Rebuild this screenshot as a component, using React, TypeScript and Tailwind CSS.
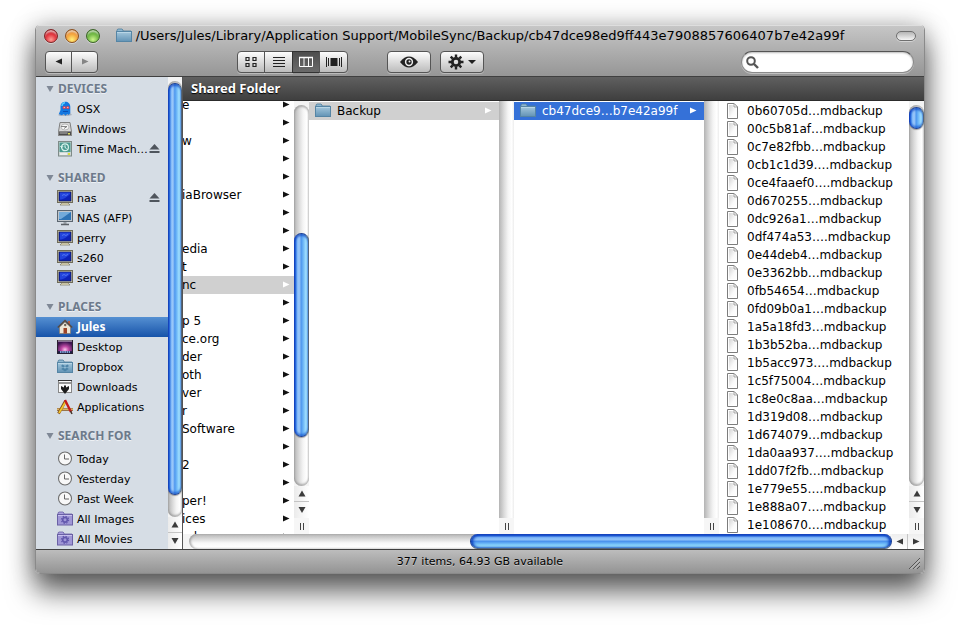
import type { ReactNode } from "react";

interface SidebarItem {
    label: string;
    icon: ReactNode;
    ejectable?: boolean;
    active?: boolean;
}

interface SidebarSection {
    title: string;
    items: SidebarItem[];
    spaced?: boolean;
}

function FolderIcon() {
    return (
        <svg width="16" height="16" viewBox="0 0 16 16" className="shrink-0" aria-hidden="true">
            <defs>
                <linearGradient id="folder" x1="0" y1="0" x2="0" y2="1">
                    <stop offset="0" stopColor="#a5c8dd" />
                    <stop offset="1" stopColor="#6293b5" />
                </linearGradient>
            </defs>
            <path d="M1 4V1.800L2 1h4l1 1v1h8v1z" fill="#8fb7d0" stroke="#4f7d9c" strokeWidth=".8" />
            <rect x=".5" y="3.500" width="15" height="10" fill="url(#folder)" stroke="#5585a5" />
            <path d="M1 4.500h14" stroke="#b9d6e6" />
        </svg>
    );
}

function DocIcon() {
    return (
        <svg width="14" height="18" viewBox="0 0 14 18" className="shrink-0" aria-hidden="true">
            <defs>
                <linearGradient id="sheet" x1="0" y1="0" x2="1" y2="1">
                    <stop offset="0" stopColor="#d4d4d4" />
                    <stop offset=".6" stopColor="#fafafa" />
                    <stop offset="1" stopColor="#fff" />
                </linearGradient>
            </defs>
            <path d="M1.500 1.500h6.500l3.500 3.500v11.500h-10z" fill="#fff" stroke="#7c7c7c" />
            <path d="M3 3h4.500v3h3v9H3z" fill="url(#sheet)" />
            <path d="M8 1.500V5h3.500z" fill="#fff" stroke="#8e8e8e" strokeWidth=".8" />
        </svg>
    );
}

function GhostIcon() {
    return (
        <svg width="16" height="16" viewBox="0 0 16 16" aria-hidden="true">
            <path d="M1 14l3-2.500h9l2 2.500-4 1H3z" fill="#8b95a3" opacity=".6" />
            <path d="M3.500 9V5.500C3.500 2.500 5.500.7 8.300.7s5 2 5 5V12l-1.500 2-1.600-1-1.700 1.700L6.800 13l-2 1.300-3-1.300z" fill="#1478e0" />
            <path d="M5 5c0-2 1.300-3.200 3-3.200" stroke="#59d0ff" strokeWidth="1.500" fill="none" />
            <circle cx="7.200" cy="6.500" r="1.600" fill="#e8404a" />
            <circle cx="10.800" cy="6.500" r="1.600" fill="#e8404a" />
            <path d="M6.800 6.500h.8M10.400 6.500h.8" stroke="#fff" />
            <path d="M6 10.500h5" stroke="#0a4fb4" />
        </svg>
    );
}

function DriveIcon() {
    return (
        <svg width="16" height="16" viewBox="0 0 16 16" aria-hidden="true">
            <path d="M3 1.500h10l1.500 9h-13z" fill="#d9d9d9" stroke="#808080" />
            <ellipse cx="8" cy="6" rx="4" ry="3" fill="#f7f7f7" stroke="#aaa" strokeWidth=".8" />
            <path d="M4 5.500h6l-3 2" stroke="#777" fill="none" strokeWidth=".9" />
            <rect x="1.500" y="10.500" width="13" height="4" fill="#4c4c4c" stroke="#888" />
            <path d="M2.500 12h8" stroke="#b5b5b5" />
            <rect x="11" y="12" width="2" height="1.500" fill="#dede5a" />
        </svg>
    );
}

function TimeMachineIcon() {
    return (
        <svg width="16" height="16" viewBox="0 0 16 16" aria-hidden="true">
            <rect x="1.500" y=".5" width="13" height="14.500" fill="#cfd6d4" stroke="#7e8b88" />
            <rect x="2.500" y="1.500" width="11" height="9.500" fill="#4a9a90" />
            <circle cx="8" cy="6.300" r="3.400" fill="none" stroke="#d8f3ec" strokeWidth="1.200" />
            <path d="M8 4.300v2.200l1.500 1M3.500 5l1.200 1.700L6 5.200" stroke="#e9fffa" fill="none" />
            <path d="M3 13h7" stroke="#f4f4f4" strokeWidth="1.500" />
            <rect x="11" y="12" width="2" height="2" fill="#d9dd3c" />
        </svg>
    );
}

function PcIcon() {
    return (
        <svg width="16" height="16" viewBox="0 0 16 16" aria-hidden="true">
            <rect x=".5" y=".5" width="15" height="12" fill="#ddd7b4" stroke="#6f6b58" />
            <rect x="2" y="2" width="12" height="9" fill="#0d22b8" stroke="#111c5a" strokeWidth=".8" />
            <path d="M3 9.500C6 9.500 9 8 13 4V2.500H3z" fill="#2344dc" />
            <path d="M5 5.500l2-1 2 1 2-1.500" stroke="#6689fb" strokeWidth=".7" fill="none" />
            <path d="M5 13h6l2 2H3z" fill="#f0eac8" stroke="#77725e" strokeWidth=".7" />
        </svg>
    );
}

function MacDisplayIcon() {
    return (
        <svg width="16" height="16" viewBox="0 0 16 16" aria-hidden="true">
            <rect x=".5" y=".5" width="15" height="11" fill="#bfc5cb" stroke="#5c6670" />
            <rect x="2" y="2" width="12" height="8" fill="#2d73b5" />
            <path d="M2 2h12L4 9H2z" fill="#72aada" />
            <path d="M6.500 12h3v2h-3z" fill="#9ca3aa" />
            <path d="M4 14.500h8" stroke="#5c6268" strokeWidth="1.500" />
        </svg>
    );
}

function HomeIcon() {
    return (
        <svg width="16" height="16" viewBox="0 0 16 16" aria-hidden="true">
            <path d="M2.500 8v6.500h11V8L8 3z" fill="#ece5d5" stroke="#85796a" strokeWidth=".7" />
            <path d="M11 2h2v4h-2z" fill="#b5573f" />
            <path d="M.8 8.500L8 1.500l7.200 7" stroke="#574a40" strokeWidth="1.500" fill="none" />
            <rect x="6.500" y="9" width="3.500" height="5.500" fill="#9c4326" />
            <circle cx="8.200" cy="6" r="1.200" fill="#6b6257" />
        </svg>
    );
}

function DesktopIcon() {
    return (
        <svg width="16" height="16" viewBox="0 0 16 16" aria-hidden="true">
            <defs>
                <radialGradient id="aurora" cx=".5" cy=".7" r=".6">
                    <stop offset="0" stopColor="#fbc6ea" />
                    <stop offset=".4" stopColor="#c04ba6" />
                    <stop offset="1" stopColor="#3c1450" />
                </radialGradient>
            </defs>
            <rect x=".5" y="1.500" width="15" height="13" fill="url(#aurora)" stroke="#2a2030" />
            <path d="M1 2h14" stroke="#d5cdd8" />
            <path d="M1 13.200h14" stroke="#191d44" strokeWidth="2" />
            <path d="M3 13h10" stroke="#9cc8ff" strokeWidth="1.500" strokeDasharray="1.500 .700" />
        </svg>
    );
}

function DropboxIcon() {
    return (
        <span className="relative block size-4">
            <FolderIcon />
            <svg width="16" height="16" viewBox="0 0 16 16" className="absolute inset-0" aria-hidden="true">
                <path d="M5.500 5.500L8 7l2.500-1.500L12 7 9.800 8.500l2 1.500L8 12.500 4.200 10l2-1.500L4 7z" fill="#4d84a8" />
                <path d="M8 7.300l2 1.200-2 1.300-2-1.300z" fill="#8fb9d2" />
            </svg>
        </span>
    );
}

function DownloadsIcon() {
    return (
        <svg width="16" height="16" viewBox="0 0 16 16" aria-hidden="true">
            <rect x="1.500" y="1.500" width="13" height="12" fill="#fafafa" stroke="#888" />
            <path d="M1 1.500h14M2 4h12" stroke="#333" />
            <path d="M4 7l3 1.500V6.500h2v2L12 7v3l-4 5-4-5z" fill="#1c1c1c" />
        </svg>
    );
}

function ApplicationsIcon() {
    return (
        <svg width="16" height="16" viewBox="0 0 16 16" aria-hidden="true">
            <path d="M0 10.500h16" stroke="#8a5c22" strokeWidth="2.600" />
            <path d="M0 10.300h16" stroke="#dcb466" strokeWidth="1.400" />
            <path d="M1.500 14.500L8.500 2" stroke="#7c4818" strokeWidth="2.800" />
            <path d="M2 14L8.800 2.500" stroke="#f3c62e" strokeWidth="1.800" />
            <path d="M8 1l6 12" stroke="#c51c1c" strokeWidth="2.400" />
            <path d="M13.500 12l1.500 3" stroke="#44362b" strokeWidth="1.500" />
        </svg>
    );
}

function ClockIcon() {
    return (
        <svg width="16" height="16" viewBox="0 0 16 16" aria-hidden="true">
            <circle cx="8" cy="7.500" r="6.500" fill="#f8f8f8" stroke="#6e6e6e" strokeWidth="1.100" />
            <path d="M7.500 3.500V8H12" stroke="#666" fill="none" />
        </svg>
    );
}

function SmartFolderIcon() {
    return (
        <svg width="16" height="16" viewBox="0 0 16 16" aria-hidden="true">
            <path d="M1 4V1.800L2 1h4l1 1v1h8v1z" fill="#aaa0dc" stroke="#6a60a5" strokeWidth=".8" />
            <rect x=".5" y="3.500" width="15" height="10.500" fill="#a097d6" stroke="#6a60a5" />
            <path d="M1 4.500h14" stroke="#c8c0ee" />
            <circle cx="8" cy="8.800" r="2.300" fill="none" stroke="#6257ac" strokeWidth="1.600" />
            <circle cx="8" cy="8.800" r="3.600" fill="none" stroke="#6257ac" strokeWidth="1.200" strokeDasharray="1.400 1.430" />
        </svg>
    );
}

function EjectIcon() {
    return (
        <svg width="12" height="12" viewBox="0 0 12 12" aria-hidden="true">
            <path d="M5.500 1l5 5.500h-10z" fill="#4f555d" />
            <path d="M.5 9h10" stroke="#4f555d" strokeWidth="2" />
        </svg>
    );
}

const sections: SidebarSection[] = [
    {
        title: "DEVICES",
        items: [
            { label: "OSX", icon: <GhostIcon /> },
            { label: "Windows", icon: <DriveIcon /> },
            { label: "Time Mach…", icon: <TimeMachineIcon />, ejectable: true },
        ],
    },
    {
        title: "SHARED",
        items: [
            { label: "nas", icon: <PcIcon />, ejectable: true },
            { label: "NAS (AFP)", icon: <MacDisplayIcon /> },
            { label: "perry", icon: <PcIcon /> },
            { label: "s260", icon: <PcIcon /> },
            { label: "server", icon: <PcIcon /> },
        ],
    },
    {
        title: "PLACES",
        items: [
            { label: "Jules", icon: <HomeIcon />, active: true },
            { label: "Desktop", icon: <DesktopIcon /> },
            { label: "Dropbox", icon: <DropboxIcon /> },
            { label: "Downloads", icon: <DownloadsIcon /> },
            { label: "Applications", icon: <ApplicationsIcon /> },
        ],
    },
    {
        title: "SEARCH FOR",
        spaced: true,
        items: [
            { label: "Today", icon: <ClockIcon /> },
            { label: "Yesterday", icon: <ClockIcon /> },
            { label: "Past Week", icon: <ClockIcon /> },
            { label: "All Images", icon: <SmartFolderIcon /> },
            { label: "All Movies", icon: <SmartFolderIcon /> },
        ],
    },
];

// This column is scrolled sideways, only the tails of the names show
const supportFolders = [
    "e", "", "w", "", "", "iaBrowser", "", "", "edia", "t", "nc", "", "p 5", "ce.org", "der",
    "oth", "ver", "r", "Software", "", "2", "", "per!", "ices", "nd",
];

const backupFiles = [
    "0b60705d…mdbackup", "00c5b81af…mdbackup", "0c7e82fbb…mdbackup", "0cb1c1d39….mdbackup",
    "0ce4faaef0….mdbackup", "0d670255…mdbackup", "0dc926a1…mdbackup", "0df474a53….mdbackup",
    "0e44deb4…mdbackup", "0e3362bb…mdbackup", "0fb54654…mdbackup", "0fd09b0a1…mdbackup",
    "1a5a18fd3…mdbackup", "1b3b52ba…mdbackup", "1b5acc973….mdbackup", "1c5f75004…mdbackup",
    "1c8e0c8aa…mdbackup", "1d319d08…mdbackup", "1d674079…mdbackup", "1da0aa937….mdbackup",
    "1dd07f2fb…mdbackup", "1e779e55….mdbackup", "1e888a07….mdbackup", "1e108670….mdbackup",
];

function Arrow({ dir }: { dir: "up" | "down" | "left" | "right" }) {
    const points = {
        up: "4,0.5 7.5,6.5 0.5,6.5",
        down: "0.5,1 7.5,1 4,7",
        left: "0.5,3.5 7,0.5 7,6.5",
        right: "1,0.5 7.5,3.5 1,6.5",
    }[dir];
    return (
        <svg width="8" height="8" viewBox="0 0 8 8" className="shrink-0" aria-hidden="true">
            <polygon points={points} fill="currentColor" />
        </svg>
    );
}

function Grip() {
    return (
        <div className="flex h-4 shrink-0 items-center justify-center gap-0.5 bg-[#f6f6f6]">
            <span className="h-[7px] w-px bg-[#444]" />
            <span className="h-[7px] w-px bg-[#444]" />
        </div>
    );
}

const trackV = "bg-[linear-gradient(to_right,#b4b4b4,#dcdcdc_35%,#f4f4f4_60%,#fff_85%,#ececec)]";
const thumbV =
    "shrink-0 rounded-full border border-l-[#1544bd] border-r-[#50657f] border-y-[#1b3f94] bg-[linear-gradient(to_right,#1c62e0,#7fb8f8_18%,#9fcaf9_32%,#4f98ee_48%,#6ab4f7_62%,#a2e2ff_85%,#8ccdf8)] shadow-[inset_0_2px_2px_#0a3fbeaa,inset_0_-2px_2px_#1659cfaa,0_1px_1px_#0005]";

function VerticalScrollbar({ offset, thumb, grip, edge }: { offset: string; thumb: string; grip?: boolean; edge?: string }) {
    return (
        <div className={`flex w-[15px] shrink-0 flex-col bg-[#f4f4f4] pt-1 ${edge ?? ""}`}>
            <div className={`flex flex-1 flex-col overflow-hidden rounded-full shadow-[inset_0_2px_2px_#8889,inset_0_-2px_2px_#8889] ${offset} ${trackV}`}>
                <div className={`${thumb} ${thumbV}`} />
            </div>
            <div className="flex shrink-0 flex-col bg-gradient-to-r from-[#ebebeb] to-white text-[#3b3b3b]">
                <button aria-label="Scroll up" className="flex h-4 items-center justify-center border-b border-[#c4c4c4]">
                    <Arrow dir="up" />
                </button>
                <button aria-label="Scroll down" className="flex h-4 items-center justify-center">
                    <Arrow dir="down" />
                </button>
            </div>
            {grip && <Grip />}
        </div>
    );
}

function EmptyRail() {
    return (
        <div className={`flex w-[15px] shrink-0 flex-col justify-end ${trackV}`}>
            <Grip />
        </div>
    );
}

function FolderRow({ name, selected }: { name: string; selected?: boolean }) {
    return (
        <button
            className={`flex h-[18px] w-full items-center gap-1.5 px-1.5 text-left ${selected ? "bg-[#3571d8] text-white" : "bg-[#d0d0d0] text-black"}`}
        >
            <FolderIcon />
            <span className="flex-1 whitespace-nowrap">{name}</span>
            <span className="pr-px text-white">
                <Arrow dir="right" />
            </span>
        </button>
    );
}

function Sidebar() {
    return (
        <aside className="flex w-[147px] shrink-0">
            <nav className="min-w-0 flex-1 bg-[#d6dde5] pt-0.5 text-[11px]">
                <div className="flex flex-col gap-[9px]">
                    {sections.map((section) => (
                        <section key={section.title}>
                            <h2 className={`flex h-5 items-center gap-1 pl-2.5 font-['Noto_Sans',sans-serif] text-[12px] font-bold text-[#6d7a8b] [text-shadow:0_1px_0_#fff9] ${section.spaced ? "mb-[3px]" : ""}`}>
                                <span className="text-[#7f8896]">
                                    <Arrow dir="down" />
                                </span>
                                {section.title}
                            </h2>
                            {section.items.map((item) => (
                                <div
                                    key={item.label}
                                    className={`flex h-5 items-center pr-[7px] pl-[21px] ${item.active ? "bg-gradient-to-b from-[#5590d2] to-[#1653a9] font-['Noto_Sans',sans-serif] text-[12px] font-bold text-white" : ""}`}
                                >
                                    <button className="flex flex-1 items-center gap-1 leading-4 whitespace-nowrap">
                                        <span className="flex w-4 shrink-0">{item.icon}</span>
                                        <span className={item.active ? "" : "pt-px"}>{item.label}</span>
                                    </button>
                                    {item.ejectable && (
                                        <button aria-label={`Eject ${item.label}`}>
                                            <EjectIcon />
                                        </button>
                                    )}
                                </div>
                            ))}
                        </section>
                    ))}
                </div>
            </nav>
            <VerticalScrollbar offset="pt-0.5" thumb="h-[412px]" edge="border-r border-[#555]" />
        </aside>
    );
}

function Columns() {
    return (
        <div className="flex overflow-hidden bg-white text-[12px] whitespace-nowrap">
            <div className="relative flex min-w-0 flex-1">
                <ul className="absolute inset-0 right-[15px] -mt-[5px] overflow-hidden [clip-path:inset(5px_0_0_0)]">
                    {supportFolders.map((name, i) => (
                        <li key={i} className={`flex h-[18px] items-center justify-between pr-1 ${name === "nc" ? "bg-[#d0d0d0]" : ""}`}>
                            <span className="-ml-px">{name}</span>
                            <span className={name === "nc" ? "text-white" : "text-[#111]"}>
                                <Arrow dir="right" />
                            </span>
                        </li>
                    ))}
                </ul>
                <div className="ml-auto flex">
                    <VerticalScrollbar offset="pt-[128px]" thumb="h-[204px]" grip />
                </div>
            </div>

            <div className="flex w-[205px] shrink-0">
                <div className="flex-1 pt-px">
                    <FolderRow name="Backup" />
                </div>
                <EmptyRail />
            </div>

            <div className="flex w-[205px] shrink-0">
                <div className="flex-1 pt-px">
                    <FolderRow name="cb47dce9…b7e42a99f" selected />
                </div>
                <EmptyRail />
            </div>

            <div className="flex w-[205px] shrink-0">
                <ul className="min-w-0 flex-1 pt-px">
                    {backupFiles.map((file) => (
                        <li key={file} className="flex h-[18px] items-center gap-[7px] pl-[7px]">
                            <DocIcon />
                            {file}
                        </li>
                    ))}
                </ul>
                <VerticalScrollbar offset="pt-0.5" thumb="h-[22px]" grip />
            </div>
        </div>
    );
}

function HorizontalScrollbar() {
    return (
        <div className="flex h-[15px] bg-[#f4f4f4] pl-1.5 text-[#3b3b3b]">
            <div className="flex flex-1 justify-end rounded-full bg-[linear-gradient(to_bottom,#b4b4b4,#dcdcdc_35%,#f8f8f8_60%,#fff_85%,#ececec)] shadow-[inset_2px_0_2px_#8889]">
                <div className="w-[60%] rounded-full border border-t-[#1544bd] border-b-[#50657f] border-x-[#1b3f94] bg-[linear-gradient(to_bottom,#1c62e0,#7fb8f8_18%,#8cc0f8_35%,#4c94ee_50%,#6fbcf8_68%,#a4ecff_90%)] shadow-[inset_2px_0_3px_#0a3fbe,inset_-2px_0_3px_#0a3fbe]" />
            </div>
            <button aria-label="Scroll left" className="flex w-4 items-center justify-center border-r border-[#c4c4c4] bg-gradient-to-b from-[#eee] to-white">
                <Arrow dir="left" />
            </button>
            <button aria-label="Scroll right" className="flex w-4 items-center justify-center bg-gradient-to-b from-[#eee] to-white">
                <Arrow dir="right" />
            </button>
        </div>
    );
}

const lights = [
    { name: "Close", color: "bg-[radial-gradient(circle_at_50%_80%,#ff9c94,#e0303a_50%,#8e1017)] border-[#7e2426]" },
    { name: "Minimize", color: "bg-[radial-gradient(circle_at_50%_80%,#fff07a,#f29a35_55%,#9a4d0d)] border-[#8a5020]" },
    { name: "Zoom", color: "bg-[radial-gradient(circle_at_50%_80%,#ccf58c,#66b13b_55%,#2c6a12)] border-[#3c6427]" },
];

const toolButton = "flex h-[22px] items-center justify-center border border-[#555] bg-gradient-to-b from-[#fdfdfd] to-[#bcbcbc] text-[#222] shadow-[0_1px_0_#ffffff55]";

function Toolbar() {
    return (
        <div className="flex items-center pr-2.5 pl-[9px]">
            <div className="flex">
                <button aria-label="Back" className={`${toolButton} w-[27px] rounded-l-[4px]`}>
                    <Arrow dir="left" />
                </button>
                <button aria-label="Forward" className={`${toolButton} -ml-px w-[27px] rounded-r-[4px]`}>
                    <span className="text-[#858585]">
                        <Arrow dir="right" />
                    </span>
                </button>
            </div>

            <div className="ml-[139px] flex">
                <button aria-label="Icon view" className={`${toolButton} w-7 rounded-l-[4px]`}>
                    <svg width="12" height="12" viewBox="0 0 12 12" fill="none" stroke="currentColor" aria-hidden="true">
                        <path d="M1 1.500h3v3H1zM8 1.500h3v3H8zM1 7.500h3v3H1zM8 7.500h3v3H8z" strokeWidth="1.200" />
                    </svg>
                </button>
                <button aria-label="List view" className={`${toolButton} -ml-px w-[29px]`}>
                    <svg width="12" height="12" viewBox="0 0 12 12" stroke="currentColor" aria-hidden="true">
                        <path d="M0 1.500h12M0 4.500h12M0 7.500h12M0 10.500h12" />
                    </svg>
                </button>
                <button aria-label="Column view" className="-ml-px flex h-[22px] w-7 items-center justify-center border border-[#333] bg-gradient-to-b from-[#4e4e4e] to-[#6a6a6a] text-white">
                    <svg width="14" height="12" viewBox="0 0 14 12" fill="none" stroke="currentColor" aria-hidden="true">
                        <path d="M.5 1.500h13v9H.5zM5 1v10M9.500 1v10" />
                        <path d="M0 1.500h14" strokeWidth="1.500" />
                    </svg>
                </button>
                <button aria-label="Cover Flow" className={`${toolButton} -ml-px w-[29px] rounded-r-[4px]`}>
                    <svg width="16" height="10" viewBox="0 0 16 10" stroke="currentColor" aria-hidden="true">
                        <path d="M.5 0v10M2.500 1v8M13.500 1v8M15.500 0v10" />
                        <path d="M4.500 1v8h7V1z" fill="currentColor" stroke="none" />
                    </svg>
                </button>
            </div>

            <button aria-label="Quick Look" className={`${toolButton} ml-[39px] w-11 rounded-[4px]`}>
                <svg width="18" height="12" viewBox="0 0 18 12" aria-hidden="true">
                    <path d="M0 6C3 2 6 .5 9 .5S15 2 18 6c-3 4-6 5.500-9 5.500S3 10 0 6z" fill="currentColor" />
                    <circle cx="9" cy="6" r="3.400" fill="none" stroke="#eee" strokeWidth="1.500" />
                    <circle cx="9.500" cy="5.500" r="1" fill="#eee" />
                </svg>
            </button>
            <button aria-label="Action" className={`${toolButton} ml-[9px] w-11 gap-1 rounded-[4px]`}>
                <svg width="16" height="16" viewBox="0 0 16 16" stroke="currentColor" fill="none" aria-hidden="true">
                    <circle cx="8" cy="8" r="3.700" strokeWidth="2.800" />
                    <path d="M8 .5v3M8 12.500v3M.5 8h3M12.500 8h3M2.700 2.700l2 2M11.300 11.300l2 2M13.300 2.700l-2 2M4.700 11.300l-2 2" strokeWidth="2.400" />
                </svg>
                <svg width="8" height="4" viewBox="0 0 8 4" aria-hidden="true">
                    <path d="M0 0h8L4 4z" fill="currentColor" />
                </svg>
            </button>

            <label className="ml-auto flex h-[22px] w-[173px] items-center gap-1 rounded-full border border-[#8a8a8a] border-t-[#555] bg-white px-1 shadow-[inset_0_1px_2px_#0004,0_1px_0_#fff6]">
                <svg width="13" height="13" viewBox="0 0 13 13" fill="none" stroke="#555" strokeWidth="2" className="shrink-0" aria-hidden="true">
                    <circle cx="5" cy="5" r="3.800" />
                    <path d="M8 8l4 4" strokeWidth="2.400" />
                </svg>
                <input type="search" aria-label="Search" className="min-w-0 flex-1 bg-transparent text-[12px] outline-none" />
            </label>
        </div>
    );
}

export default function App() {
    return (
        <div className="overflow-hidden bg-white px-[35px] pt-[25px] pb-[54px] font-['DejaVu_Sans',sans-serif] text-black">
            <main className="overflow-hidden rounded-[5px] border-x border-b border-[#8a8a8a] shadow-[0_18px_28px_#0009,0_0_24px_#0004]">
                <header className="border-t border-b border-t-[#dedede] border-b-[#404040] bg-gradient-to-b from-[#c6c6c6] to-[#969696] pb-[3px]">
                    <div className="flex h-[25px] items-center px-2 pb-1.5">
                        <div className="flex w-14 shrink-0 gap-[7px]">
                            {lights.map((light) => (
                                <button key={light.name} aria-label={light.name} className={`size-3.5 shrink-0 rounded-full border shadow-[inset_0_3px_2px_-1px_#fffa,0_1px_0_#fff6] ${light.color}`} />
                            ))}
                        </div>
                        <h1 className="flex flex-1 items-center justify-center gap-1 text-[13px] whitespace-nowrap">
                            <FolderIcon />
                            /Users/Jules/Library/Application Support/MobileSync/Backup/cb47dce98ed9ff443e7908857606407b7e42a99f
                        </h1>
                        <button aria-label="Toggle toolbar" className="ml-9 h-2.5 w-5 shrink-0 rounded-full border border-[#6f6f6f] bg-gradient-to-b from-[#b5b5b5] to-[#f5f5f5] shadow-[0_1px_0_#fff6]" />
                    </div>
                    <Toolbar />
                </header>

                <div className="flex">
                    <Sidebar />
                    <div className="min-w-0 flex-1">
                        <h2 className="h-6 border-b border-[#2c2c2c] bg-gradient-to-b from-[#606060] to-[#3f3f3f] pl-2 font-['Noto_Sans',sans-serif] text-[13px] leading-[23px] font-bold text-white [text-shadow:0_1px_1px_#000]">
                            Shared Folder
                        </h2>
                        <Columns />
                        <HorizontalScrollbar />
                    </div>
                </div>

                <footer className="relative border-t border-[#404040] bg-gradient-to-b from-[#bdbdbd] to-[#949494] pt-px text-center text-[11px] leading-[22px] [text-shadow:0_1px_0_#fff6]">
                    377 items, 64.93 GB available
                    <svg width="12" height="12" viewBox="0 0 12 12" className="absolute right-1 bottom-1" aria-hidden="true">
                        <path d="M1 12L12 1M5 12l7-7M9 12l3-3" stroke="#555" />
                        <path d="M2 12.500L12.500 2M6 12.500L12.500 6" stroke="#ddd" strokeWidth=".6" />
                    </svg>
                </footer>
            </main>
        </div>
    );
}
